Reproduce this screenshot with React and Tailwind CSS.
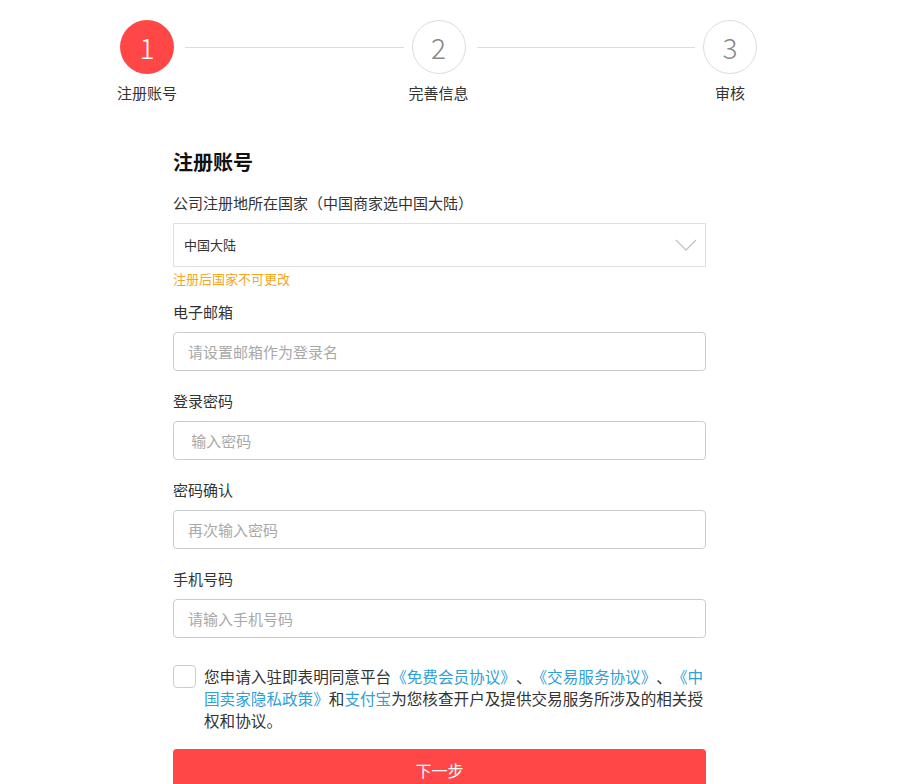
import React from "react";

const font = { fontFamily: '"Noto Sans CJK SC", "Noto Sans", sans-serif' };

const Step = ({ n, label, active }) => (
  <div className="flex flex-col items-center w-[54px] shrink-0">
    <div
      className={
        active
          ? "w-[54px] h-[54px] rounded-full bg-[#ff4747] text-white flex items-center justify-center text-[28px] font-light"
          : "w-[54px] h-[54px] rounded-full border border-[#dcdcdc] text-[#888] flex items-center justify-center text-[28px] font-light"
      }
    >
      {n}
    </div>
    <div className="mt-[9px] whitespace-nowrap text-[15px] leading-[20px] text-[#333]">{label}</div>
  </div>
);

const Line = () => <div className="flex-1 h-px bg-[#dcdcdc] mt-[27px] ml-[11px] mr-[8px]" />;

const Field = ({ label, placeholder }) => (
  <div className="flex flex-col">
    <div className="text-[15px] leading-[20px] text-[#333]">{label}</div>
    <input
      className="mt-[10px] h-[39px] w-full rounded-[4px] border border-[#c9cdd2] px-[14px] text-[15px] text-[#333] placeholder:text-[#a9a9a9] outline-none"
      placeholder={placeholder}
    />
  </div>
);

const App = () => {
  return (
    <div className="min-h-[784px] bg-white pt-[20px]" style={font}>
      {/* steps */}
      <div className="flex ml-[120px] w-[637px]">
        <Step n="1" label="注册账号" active />
        <Line />
        <Step n="2" label="完善信息" />
        <Line />
        <Step n="3" label="审核" />
      </div>

      <div className="ml-[173px] w-[533px] mt-[45px] flex flex-col">
        <h2 className="text-[20px] leading-[28px] font-bold text-[#111]">注册账号</h2>

        <div className="mt-[17px] text-[15px] leading-[20px] text-[#333]">公司注册地所在国家（中国商家选中国大陆）</div>
        <div className="mt-[10px] h-[44px] border border-[#e0e0e0] flex items-center justify-between pl-[10px] pr-[8px]">
          <span className="text-[13px] text-[#333]">中国大陆</span>
          <svg width="22" height="14" viewBox="0 0 22 14" fill="none">
            <polyline points="1,2 11,12 21,2" stroke="#c4c4c4" strokeWidth="1.3" />
          </svg>
        </div>
        <div className="mt-[3px] text-[13px] leading-[18px] text-[#f5a623]">注册后国家不可更改</div>

        <div className="mt-[14px] flex flex-col gap-[20px]">
          <Field label="电子邮箱" placeholder="请设置邮箱作为登录名" />
          <Field label="登录密码" placeholder=" 输入密码" />
          <Field label="密码确认" placeholder="再次输入密码" />
          <Field label="手机号码" placeholder="请输入手机号码" />
        </div>

        <div className="mt-[27px] flex items-start">
          <div className="w-[23px] h-[23px] shrink-0 rounded-[4px] border border-[#c9cdd2]" />
          <p className="ml-[8px] w-[502px] text-[15.6px] leading-[22px] text-[#333] [text-spacing-trim:space-all]">
            您申请入驻即表明同意平台<span className="text-[#2f9fd8]">《免费会员协议》</span>、<span className="text-[#2f9fd8]">《交易服务协议》</span>、<span className="text-[#2f9fd8]">《中国卖家隐私政策》</span>和<span className="text-[#2f9fd8]">支付宝</span>为您核查开户及提供交易服务所涉及的相关授权和协议。
          </p>
        </div>

        <button className="mt-[18px] h-[42px] w-full rounded-[4px] bg-[#ff4747] text-white text-[16px]">下一步</button>
      </div>
    </div>
  );
};

export default App;
